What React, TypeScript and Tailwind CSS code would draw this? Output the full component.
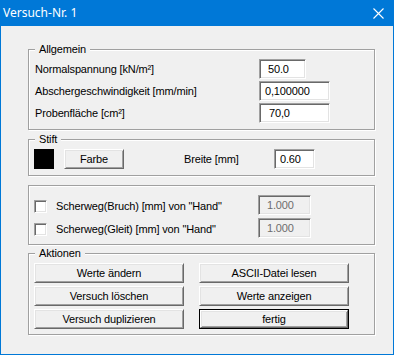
import React from "react";

const raised =
    "border border-t-white border-l-white border-r-[#696969] border-b-[#696969] shadow-[inset_1px_1px_0_#e3e3e3,inset_-1px_-1px_0_#a0a0a0] bg-[#f0f0f0]";
const sunken =
    "border border-t-[#a0a0a0] border-l-[#a0a0a0] border-r-white border-b-white shadow-[inset_1px_1px_0_#696969,inset_-1px_-1px_0_#e3e3e3]";

function Group({ label, className, children }: { label?: string; className: string; children: React.ReactNode }) {
    return (
        <div className={`relative w-[347px] border border-[#a0a0a0] shadow-[inset_1px_1px_0_#fff,1px_1px_0_#fff] ${className}`}>
            {label && (
                <span className="absolute left-[6px] top-[-7px] px-[4px] leading-[13px] bg-[#f0f0f0]">
                    {label}
                </span>
            )}
            {children}
        </div>
    );
}

function Field({ value, className, disabled }: { value: string; className: string; disabled?: boolean }) {
    return (
        <div
            className={`h-[20px] flex items-center ${sunken} ${disabled ? "bg-[#f0f0f0] text-[#6d6d6d]" : "bg-white"} ${className}`}
        >
            {value}
        </div>
    );
}

function Button({ text, isDefault }: { text: string; isDefault?: boolean }) {
    if (isDefault) {
        return (
            <div className="w-[150px] h-[20px] border border-black flex">
                <div className={`flex-1 flex items-center justify-center ${raised}`}>{text}</div>
            </div>
        );
    }
    return (
        <div className={`w-[150px] h-[20px] flex items-center justify-center ${raised}`}>{text}</div>
    );
}

function Checkbox() {
    return <div className={`w-[13px] h-[13px] bg-white ${sunken}`} />;
}

export default function App() {
    return (
        <div className="w-[394px] h-[355px] border border-t-0 border-[#0078d7] bg-[#f0f0f0] flex flex-col font-['Liberation_Sans',Arial,sans-serif] text-[11px] tracking-[-0.15px] text-black">
            {/* title bar */}
            <div className="h-[26px] bg-[#0078d7] flex items-center justify-between pl-[3px] pr-[9px] -mx-[1px]">
                <span className="text-white text-[12px] tracking-normal font-['Noto_Sans',sans-serif]">Versuch-Nr. 1</span>
                <svg width="11" height="11" viewBox="0 0 11 11" className="mr-[1px]">
                    <path d="M0.5 0.5 L10.5 10.5 M10.5 0.5 L0.5 10.5" stroke="white" strokeWidth="1.1" />
                </svg>
            </div>

            <div className="flex flex-col pl-[27px] pt-[23px] gap-[9px]">
                <Group label="Allgemein" className="h-[81px] pt-[9px] pl-[6px]">
                    <div className="flex flex-col gap-[2px]">
                        <div className="flex items-center h-[20px]">
                            <span className="w-[224px]">Normalspannung [kN/m²]</span>
                            <Field value="50.0" className="w-[47px] pl-[8px]" />
                        </div>
                        <div className="flex items-center h-[20px]">
                            <span className="w-[224px]">Abschergeschwindigkeit [mm/min]</span>
                            <Field value="0,100000" className="w-[71px] pl-[5px]" />
                        </div>
                        <div className="flex items-center h-[20px]">
                            <span className="w-[224px]">Probenfläche [cm²]</span>
                            <Field value="70,0" className="w-[71px] pl-[9px]" />
                        </div>
                    </div>
                </Group>

                <Group label="Stift" className="h-[37px] pt-[8px] pl-[5px]">
                    <div className="flex items-center h-[22px]">
                        <div className="w-[20px] h-[20px] bg-black" />
                        <div className={`ml-[10px] w-[60px] h-[20px] flex items-center justify-center ${raised}`}>Farbe</div>
                        <span className="ml-[60px] w-[90px]">Breite [mm]</span>
                        <Field value="0.60" className="w-[41px] h-[19px] pl-[5px]" />
                    </div>
                </Group>

                <Group className="h-[60px] pt-[9px] pl-[5px] mb-[-1px]">
                    <div className="flex flex-col gap-[3px]">
                        <div className="flex items-center h-[20px]">
                            <div className="w-[224px] flex items-center pt-[2px]">
                                <Checkbox />
                                <span className="ml-[9px]">Scherweg(Bruch) [mm] von "Hand"</span>
                            </div>
                            <Field value="1.000" disabled className="w-[53px] pl-[8px]" />
                        </div>
                        <div className="flex items-center h-[20px]">
                            <div className="w-[224px] flex items-center pt-[2px]">
                                <Checkbox />
                                <span className="ml-[9px]">Scherweg(Gleit) [mm] von "Hand"</span>
                            </div>
                            <Field value="1.000" disabled className="w-[53px] pl-[8px]" />
                        </div>
                    </div>
                </Group>

                <Group label="Aktionen" className="h-[82px] pt-[9px] pl-[5px]">
                    <div className="grid grid-cols-[150px_150px] gap-x-[15px] gap-y-[3px]">
                        <Button text="Werte ändern" />
                        <Button text="ASCII-Datei lesen" />
                        <Button text="Versuch löschen" />
                        <Button text="Werte anzeigen" />
                        <Button text="Versuch duplizieren" />
                        <Button text="fertig" isDefault />
                    </div>
                </Group>
            </div>
        </div>
    );
}
